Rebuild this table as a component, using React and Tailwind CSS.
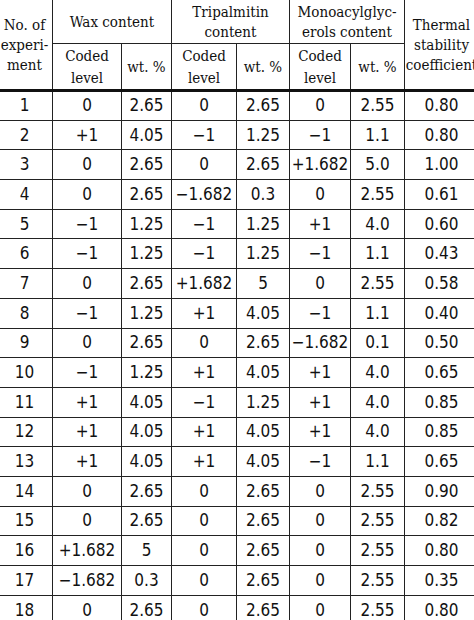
import React from 'react';

const rows = [
  ['1', '0', '2.65', '0', '2.65', '0', '2.55', '0.80'],
  ['2', '+1', '4.05', '−1', '1.25', '−1', '1.1', '0.80'],
  ['3', '0', '2.65', '0', '2.65', '+1.682', '5.0', '1.00'],
  ['4', '0', '2.65', '−1.682', '0.3', '0', '2.55', '0.61'],
  ['5', '−1', '1.25', '−1', '1.25', '+1', '4.0', '0.60'],
  ['6', '−1', '1.25', '−1', '1.25', '−1', '1.1', '0.43'],
  ['7', '0', '2.65', '+1.682', '5', '0', '2.55', '0.58'],
  ['8', '−1', '1.25', '+1', '4.05', '−1', '1.1', '0.40'],
  ['9', '0', '2.65', '0', '2.65', '−1.682', '0.1', '0.50'],
  ['10', '−1', '1.25', '+1', '4.05', '+1', '4.0', '0.65'],
  ['11', '+1', '4.05', '−1', '1.25', '+1', '4.0', '0.85'],
  ['12', '+1', '4.05', '+1', '4.05', '+1', '4.0', '0.85'],
  ['13', '+1', '4.05', '+1', '4.05', '−1', '1.1', '0.65'],
  ['14', '0', '2.65', '0', '2.65', '0', '2.55', '0.90'],
  ['15', '0', '2.65', '0', '2.65', '0', '2.55', '0.82'],
  ['16', '+1.682', '5', '0', '2.65', '0', '2.55', '0.80'],
  ['17', '−1.682', '0.3', '0', '2.65', '0', '2.55', '0.35'],
  ['18', '0', '2.65', '0', '2.65', '0', '2.55', '0.80'],
];

const widths = ['w-[56px]', 'w-[69px]', 'w-[50px]', 'w-[65px]', 'w-[53px]', 'w-[61px]', 'w-[54px]', 'w-[74px]'];

const head = "font-['DejaVu_Serif_Condensed','DejaVu_Serif',serif] text-[15px] leading-[20px] text-[#111] text-center align-middle border border-[#222] font-normal";
const sub = "font-['DejaVu_Serif_Condensed','DejaVu_Serif',serif] text-[15px] leading-[22px] text-[#111] text-center align-middle border border-[#222] font-normal";

export default function App() {
  return (
    <div className="w-[474px] h-[620px] overflow-hidden bg-white">
      <table className="ml-[-4px] mt-[-1px] border-collapse table-fixed w-[482px]">
        <colgroup>
          {widths.map((w, i) => (
            <col key={i} className={w} />
          ))}
        </colgroup>
        <thead>
          <tr className="h-[44px]">
            <th rowSpan={2} className={head}>No. of<br />experi-<br />ment</th>
            <th colSpan={2} className={head}>Wax content</th>
            <th colSpan={2} className={head}>Tripalmitin<br />content</th>
            <th colSpan={2} className={head}>Monoacylglyc-<br />erols content</th>
            <th rowSpan={2} className={head}>Thermal<br />stability<br />coefficient</th>
          </tr>
          <tr className="h-[47px] border-b-[3px] border-[#111]">
            <th className={sub}>Coded<br />level</th>
            <th className={sub}>wt. %</th>
            <th className={sub}>Coded<br />level</th>
            <th className={sub}>wt. %</th>
            <th className={sub}>Coded<br />level</th>
            <th className={sub}>wt. %</th>
          </tr>
        </thead>
        <tbody>
          {rows.map((r) => (
            <tr key={r[0]} className="h-[29.7px]">
              {r.map((c, i) => (
                <td
                  key={i}
                  className="border border-[#222] text-center align-middle p-0 font-['DejaVu_Sans_Condensed','DejaVu_Sans',sans-serif] text-[17px] leading-none text-[#111]"
                >
                  {c}
                </td>
              ))}
            </tr>
          ))}
        </tbody>
      </table>
    </div>
  );
}
